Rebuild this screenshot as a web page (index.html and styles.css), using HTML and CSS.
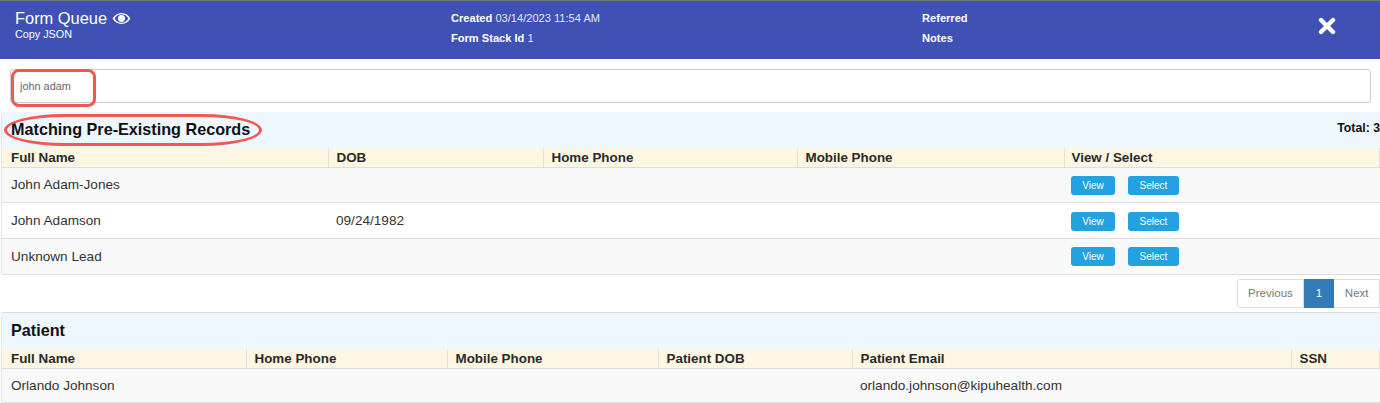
FILE: index.html
```html
<!DOCTYPE html>
<html lang="en">
<head>
  <meta charset="UTF-8" />
  <title>Form Queue</title>
  <link rel="stylesheet" href="styles.css">
</head>
<body>
  <header class="topbar">
    <div class="title-col">
      <div class="title">Form Queue
        <svg class="eye" width="19" height="13" viewBox="0 0 18 12"><path d="M9 .8C5.4.8 2.300 2.900.6 6c1.700 3.100 4.800 5.200 8.400 5.200s6.700-2.100 8.400-5.200C15.700 2.900 12.600.8 9 .8zm0 9.200C6.300 10 4 8.600 2.400 6 4 3.400 6.300 2 9 2s5 1.400 6.600 4C14 8.600 11.700 10 9 10z" fill="#fff"/><circle cx="9" cy="6" r="3.300" fill="#fff"/></svg>
      </div>
      <div class="copy">Copy JSON</div>
    </div>
    <div class="meta-col">
      <div><strong>Created</strong> 03/14/2023 11:54 AM</div>
      <div><strong>Form Stack Id</strong> 1</div>
    </div>
    <div class="meta-col refer-col">
      <div><strong>Referred</strong></div>
      <div><strong>Notes</strong></div>
    </div>
    <svg class="close" width="18" height="18" viewBox="0 0 18 18"><path d="M3 3l12 12M15 3L3 15" stroke="#fff" stroke-width="4.400" stroke-linecap="round"/></svg>
  </header>

  <div class="search-wrap">
    <input class="search" type="text" value="john adam">
    <div class="mark-box"></div>
  </div>

  <section class="panel">
    <div class="panel-head">
      <h2>Matching Pre-Existing Records</h2>
      <span class="total">Total: 3</span>
      <div class="mark-oval"></div>
    </div>
    <table class="records">
      <colgroup>
        <col class="c1"><col class="c2"><col class="c3"><col class="c4"><col>
      </colgroup>
      <thead>
        <tr><th>Full Name</th><th>DOB</th><th>Home Phone</th><th>Mobile Phone</th><th>View / Select</th></tr>
      </thead>
      <tbody>
        <tr class="odd"><td>John Adam-Jones</td><td></td><td></td><td></td><td><a class="btn">View</a><a class="btn">Select</a></td></tr>
        <tr><td>John Adamson</td><td>09/24/1982</td><td></td><td></td><td><a class="btn">View</a><a class="btn">Select</a></td></tr>
        <tr class="odd"><td>Unknown Lead</td><td></td><td></td><td></td><td><a class="btn">View</a><a class="btn">Select</a></td></tr>
      </tbody>
    </table>
  </section>

  <div class="pager">
    <a>Previous</a><a class="current">1</a><a>Next</a>
  </div>

  <section class="panel bordered">
    <div class="panel-head">
      <h2>Patient</h2>
    </div>
    <table class="patient">
      <colgroup>
        <col class="p1"><col class="p2"><col class="p3"><col class="p4"><col class="p5"><col>
      </colgroup>
      <thead>
        <tr><th>Full Name</th><th>Home Phone</th><th>Mobile Phone</th><th>Patient DOB</th><th>Patient Email</th><th>SSN</th></tr>
      </thead>
      <tbody>
        <tr class="odd"><td>Orlando Johnson</td><td></td><td></td><td></td><td>orlando.johnson@kipuhealth.com</td><td></td></tr>
      </tbody>
    </table>
  </section>
</body>
</html>
```

FILE: styles.css
```css
* {
  box-sizing: border-box;
}
html, body {
  height: 403px;
  overflow: hidden;
}
body {
  margin: 0;
  background: white;
  color: #333;
  font-family: "Liberation Sans", Arial, sans-serif;
  font-size: 13.600px;
}
.topbar {
  display: flex;
  height: 59px;
  padding: 7px 0 0 15px;
  background: #3f51b5;
  border-top: 1px solid #777;
  color: white;
  position: relative;
}
.title-col {
  width: 436px;
}
.title {
  font-size: 16.400px;
  line-height: 20px;
}
.eye {
  vertical-align: -1px;
}
.copy {
  font-size: 10.800px;
  line-height: 12px;
}
.meta-col {
  width: 471px;
  font-size: 11.100px;
  line-height: 20px;
  color: #e3e6f5;
}
.meta-col strong {
  color: white;
}
.refer-col {
  width: 300px;
}
.close {
  position: absolute;
  top: 16px;
  right: 44px;
}
.search-wrap {
  padding: 10px 9px 9px 10px;
  position: relative;
}
.search {
  display: block;
  width: 100%;
  height: 34px;
  padding: 0 9px;
  border: 1px solid #ccc;
  border-radius: 3px;
  font-family: inherit;
  font-size: 10.900px;
  color: #666;
}
.mark-box {
  position: absolute;
  left: 11px;
  top: 10px;
  width: 85px;
  height: 38px;
  border: 3px solid #f2594e;
  border-radius: 8px;
}
.panel {
  margin-left: 1px;
  border-left: 1px solid #e4e4e4;
  border-radius: 3px;
}
.panel.bordered {
  border-top: 1px solid #ddd;
}
.panel-head {
  display: flex;
  justify-content: space-between;
  height: 36px;
  padding: 7px 0 0 9px;
  background: #eef6fe;
  position: relative;
}
.panel-head h2 {
  margin: 0;
  font-size: 16.200px;
  line-height: 20px;
  color: #111;
}
.total {
  margin-top: 1px;
  font-size: 12.300px;
  font-weight: bold;
  line-height: 16px;
  color: #111;
}
.mark-oval {
  position: absolute;
  left: 2px;
  top: 2px;
  width: 258px;
  height: 32px;
  border: 3px solid #f2594e;
  border-radius: 60px / 16px;
}
table {
  width: 1378px;
  table-layout: fixed;
  border-collapse: collapse;
}
.c1 { width: 326px; }
.c2 { width: 215px; }
.c3 { width: 254px; }
.c4 { width: 267px; }
.p1 { width: 244px; }
.p2 { width: 201px; }
.p3 { width: 211px; }
.p4 { width: 194px; }
.p5 { width: 439px; }
th {
  height: 19px;
  padding: 0 8px;
  background: #fdf6e3;
  border-right: 1px solid #e2e2e2;
  border-bottom: 1px solid #ddd;
  font-size: 13.400px;
  text-align: left;
  color: #2a2a2a;
}
.patient th {
  height: 20px;
}
th:first-child, td:first-child {
  padding-left: 9px;
}
td {
  padding: 0 8px;
  border-bottom: 1px solid #ddd;
  color: #333;
}
.records th:last-child, .records td:last-child {
  padding-left: 7px;
}
.records td {
  height: 35.700px;
}
.patient td {
  height: 34px;
}
.odd td {
  background: #f9f9f9;
}
.btn {
  display: inline-block;
  width: 44px;
  height: 19px;
  margin-top: 1px;
  margin-right: 13px;
  background: #22a2e0;
  border-radius: 3px;
  color: white;
  font-size: 10px;
  line-height: 19px;
  text-align: center;
  vertical-align: middle;
}
.btn + .btn {
  width: 51px;
}
.pager {
  display: flex;
  justify-content: flex-end;
  height: 37px;
  padding-top: 4px;
}
.pager a {
  height: 29px;
  padding: 0 10.500px;
  border: 1px solid #ddd;
  border-left: none;
  color: #777;
  font-size: 11.500px;
  line-height: 27px;
}
.pager a:first-child {
  border-left: 1px solid #ddd;
  border-radius: 3px 0 0 3px;
}
.pager a.current {
  width: 30px;
  padding: 0;
  background: #337ab7;
  border-color: #337ab7;
  color: white;
  text-align: center;
}
```
